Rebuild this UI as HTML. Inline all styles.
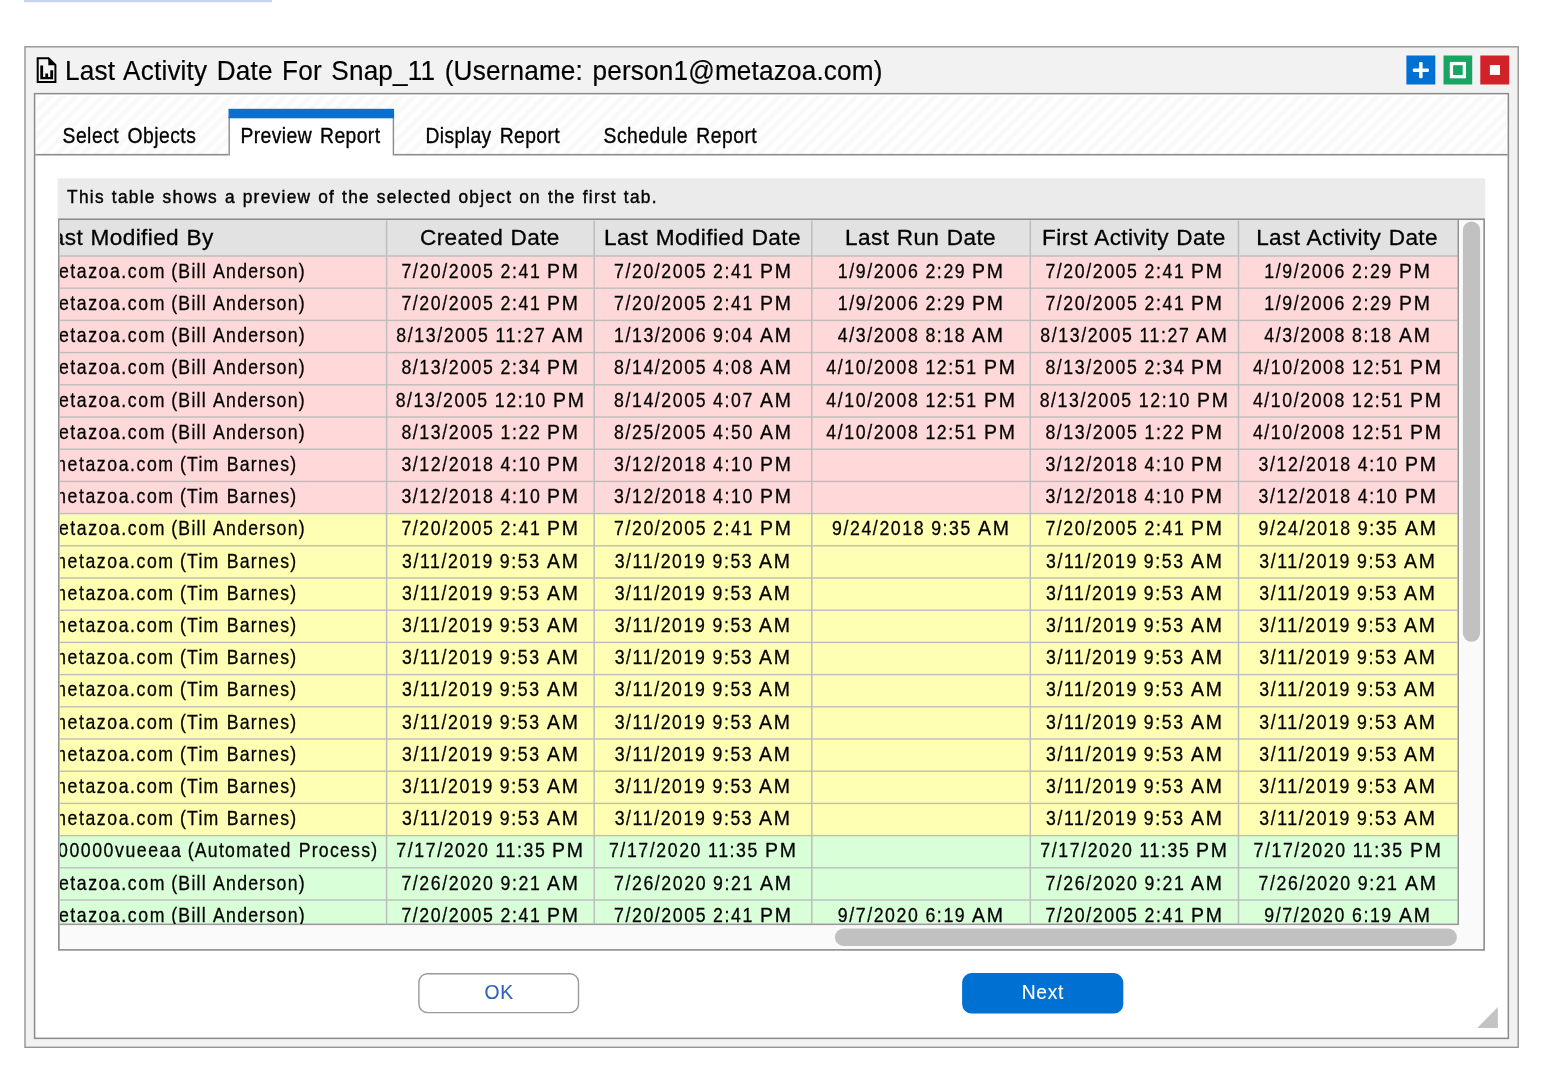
<!DOCTYPE html>
<html lang="en">
<head>
<meta charset="utf-8">
<title>Last Activity Date For Snap_11</title>
<style>
html,body{margin:0;padding:0;background:#ffffff;}
body{width:1542px;height:1080px;position:relative;overflow:hidden;font-family:"Liberation Sans", sans-serif;color:#000;}
svg.chrome{position:absolute;left:0;top:0;}
.t{position:absolute;white-space:nowrap;margin:0;padding:0;}
.txt{position:absolute;left:0;top:0;width:1542px;height:1080px;will-change:transform;}
.vp{position:absolute;overflow:hidden;}
.ap{display:inline-block;transform:scaleX(1.1);transform-origin:0 50%;margin-right:2.7px;}
</style>
</head>
<body>
<svg class="chrome" width="1542" height="1080" viewBox="0 0 1542 1080">
<defs>
<pattern id="hatch" width="9.2" height="9.2" patternUnits="userSpaceOnUse" patternTransform="rotate(-45)">
<rect x="0" y="0" width="9.2" height="9.2" fill="#ffffff"/><rect x="0" y="0" width="9.2" height="4.6" fill="#f9f9f9"/>
</pattern>
<clipPath id="vp"><rect x="59.6" y="220" width="1398" height="703.6"/></clipPath>
</defs>
<rect x="24" y="0" width="248" height="2.2" fill="#c6d4ee"/>
<rect x="25" y="46.8" width="1493.2" height="1000.5" fill="#f2f2f2" stroke="#939393" stroke-width="1.4"/>
<rect x="34.6" y="93.65" width="1473.75" height="944.7" fill="#ffffff" stroke="#8a8a8a" stroke-width="1.5"/>
<rect x="36.6" y="95.8" width="1469.8" height="58" fill="url(#hatch)"/>
<rect x="35.3" y="153.9" width="1472.3" height="1.6" fill="#8c8c8c"/>
<rect x="228.5" y="109" width="165.6" height="47.5" fill="#ffffff"/>
<rect x="228.5" y="117" width="1.4" height="38.5" fill="#8c8c8c"/>
<rect x="392.7" y="117" width="1.4" height="38.5" fill="#8c8c8c"/>
<rect x="228.5" y="108.8" width="165.6" height="9.5" fill="#0d6fcd"/>
<rect x="57.6" y="178.3" width="1427.6" height="41" fill="#ebebeb"/>
<rect x="58.85" y="219.25" width="1425.3" height="730.65" fill="#fafafa" stroke="#8c8c8c" stroke-width="1.6"/>
<rect x="59.6" y="220" width="1398" height="36" fill="#e2e2e2"/>
<g clip-path="url(#vp)">
<rect x="59.6" y="256" width="1398" height="32.7" fill="#ffd9d9"/>
<rect x="59.6" y="288.2" width="1398" height="32.7" fill="#ffd9d9"/>
<rect x="59.6" y="320.4" width="1398" height="32.7" fill="#ffd9d9"/>
<rect x="59.6" y="352.6" width="1398" height="32.7" fill="#ffd9d9"/>
<rect x="59.6" y="384.8" width="1398" height="32.7" fill="#ffd9d9"/>
<rect x="59.6" y="417" width="1398" height="32.7" fill="#ffd9d9"/>
<rect x="59.6" y="449.2" width="1398" height="32.7" fill="#ffd9d9"/>
<rect x="59.6" y="481.4" width="1398" height="32.7" fill="#ffd9d9"/>
<rect x="59.6" y="513.6" width="1398" height="32.7" fill="#ffffb4"/>
<rect x="59.6" y="545.8" width="1398" height="32.7" fill="#ffffb4"/>
<rect x="59.6" y="578" width="1398" height="32.7" fill="#ffffb4"/>
<rect x="59.6" y="610.2" width="1398" height="32.7" fill="#ffffb4"/>
<rect x="59.6" y="642.4" width="1398" height="32.7" fill="#ffffb4"/>
<rect x="59.6" y="674.6" width="1398" height="32.7" fill="#ffffb4"/>
<rect x="59.6" y="706.8" width="1398" height="32.7" fill="#ffffb4"/>
<rect x="59.6" y="739" width="1398" height="32.7" fill="#ffffb4"/>
<rect x="59.6" y="771.2" width="1398" height="32.7" fill="#ffffb4"/>
<rect x="59.6" y="803.4" width="1398" height="32.7" fill="#ffffb4"/>
<rect x="59.6" y="835.6" width="1398" height="32.7" fill="#d9ffd9"/>
<rect x="59.6" y="867.8" width="1398" height="32.7" fill="#d9ffd9"/>
<rect x="59.6" y="900" width="1398" height="32.7" fill="#d9ffd9"/>
<rect x="59.6" y="255.3" width="1398" height="1.4" fill="#bdbdbd"/>
<rect x="59.6" y="287.5" width="1398" height="1.4" fill="#bdbdbd"/>
<rect x="59.6" y="319.7" width="1398" height="1.4" fill="#bdbdbd"/>
<rect x="59.6" y="351.9" width="1398" height="1.4" fill="#bdbdbd"/>
<rect x="59.6" y="384.1" width="1398" height="1.4" fill="#bdbdbd"/>
<rect x="59.6" y="416.3" width="1398" height="1.4" fill="#bdbdbd"/>
<rect x="59.6" y="448.5" width="1398" height="1.4" fill="#bdbdbd"/>
<rect x="59.6" y="480.7" width="1398" height="1.4" fill="#bdbdbd"/>
<rect x="59.6" y="512.9" width="1398" height="1.4" fill="#bdbdbd"/>
<rect x="59.6" y="545.1" width="1398" height="1.4" fill="#bdbdbd"/>
<rect x="59.6" y="577.3" width="1398" height="1.4" fill="#bdbdbd"/>
<rect x="59.6" y="609.5" width="1398" height="1.4" fill="#bdbdbd"/>
<rect x="59.6" y="641.7" width="1398" height="1.4" fill="#bdbdbd"/>
<rect x="59.6" y="673.9" width="1398" height="1.4" fill="#bdbdbd"/>
<rect x="59.6" y="706.1" width="1398" height="1.4" fill="#bdbdbd"/>
<rect x="59.6" y="738.3" width="1398" height="1.4" fill="#bdbdbd"/>
<rect x="59.6" y="770.5" width="1398" height="1.4" fill="#bdbdbd"/>
<rect x="59.6" y="802.7" width="1398" height="1.4" fill="#bdbdbd"/>
<rect x="59.6" y="834.9" width="1398" height="1.4" fill="#bdbdbd"/>
<rect x="59.6" y="867.1" width="1398" height="1.4" fill="#bdbdbd"/>
<rect x="59.6" y="899.3" width="1398" height="1.4" fill="#bdbdbd"/>
<rect x="59.6" y="931.5" width="1398" height="1.4" fill="#bdbdbd"/>
<rect x="385.85" y="220.5" width="1.5" height="704" fill="#bdbdbd"/>
<rect x="593.45" y="220.5" width="1.5" height="704" fill="#bdbdbd"/>
<rect x="811.05" y="220.5" width="1.5" height="704" fill="#bdbdbd"/>
<rect x="1029.55" y="220.5" width="1.5" height="704" fill="#bdbdbd"/>
<rect x="1237.75" y="220.5" width="1.5" height="704" fill="#bdbdbd"/>
</g>
<rect x="1457.5" y="220" width="1.5" height="705" fill="#8f8f8f"/>
<rect x="59.6" y="923.5" width="1399.3" height="1.6" fill="#9b9b9b"/>
<rect x="1462.9" y="221.6" width="17.2" height="420.1" rx="8.6" fill="#c1c1c1"/>
<rect x="834.9" y="928.5" width="622" height="17.4" rx="8.7" fill="#c1c1c1"/>
<rect x="418.9" y="973.7" width="159.6" height="38.9" rx="8.5" fill="#ffffff" stroke="#9a9a9a" stroke-width="1.4"/>
<rect x="962.1" y="973.1" width="161.2" height="40.4" rx="9.5" fill="#0070d2"/>
<path d="M1497.9 1007.1 L1497.9 1027.9 L1477.1 1027.9 Z" fill="#c3c3c3"/>
<rect x="1406.4" y="55.5" width="28.9" height="29" fill="#0070d2"/>
<rect x="1412.8" y="68.6" width="16.1" height="3.4" rx="1.2" fill="#ffffff"/>
<rect x="1419.1" y="62" width="3.5" height="16.3" rx="1.2" fill="#ffffff"/>
<rect x="1443.5" y="55.5" width="28.7" height="29" fill="#19a463"/>
<rect x="1451.45" y="63.55" width="12.9" height="13.1" fill="none" stroke="#ffffff" stroke-width="3.3"/>
<rect x="1480.3" y="55.5" width="28.9" height="29" fill="#d12229"/>
<rect x="1489.9" y="65.1" width="10.1" height="9.8" fill="#ffffff"/>
<g>
<path d="M37.7 58.2 H48.6 L55.4 65 V82 H37.7 Z" fill="#f4f4f4" stroke="#000000" stroke-width="2" stroke-linejoin="miter"/>
<path d="M48.3 57.6 V65.2 H56.2 Z" fill="#000000"/>
<path d="M40.3 65.6 H43.1 V77 H45.3 V73.6 H48.1 V77 H50.3 V70.3 H53.1 V79.2 H40.3 Z" fill="#000000"/>
</g>
</svg>
<div class="txt">
<div class="t title" style="top:49.7px;font-size:28.4px;line-height:40px;height:40px;letter-spacing:0.17px;word-spacing:2.2px;transform:scale(0.922,0.99);transform-origin:0 30px;-webkit-text-stroke:0.2px #000;left:65.3px;">Last Activity Date For Snap_11 (Username: person1@metazoa.com)</div>
<div class="t tab" style="top:122.7px;font-size:19.3px;line-height:27px;height:27px;letter-spacing:0.52px;word-spacing:2.3px;transform:scale(1,1.15);transform-origin:0 20px;-webkit-text-stroke:0.3px #000;left:62.5px;">Select Objects</div>
<div class="t tab" style="top:122.7px;font-size:19.3px;line-height:27px;height:27px;letter-spacing:0.42px;word-spacing:2.3px;transform:scale(1,1.15);transform-origin:0 20px;-webkit-text-stroke:0.3px #000;left:240.5px;">Preview Report</div>
<div class="t tab" style="top:122.7px;font-size:19.3px;line-height:27px;height:27px;letter-spacing:0.42px;word-spacing:2.3px;transform:scale(1,1.15);transform-origin:0 20px;-webkit-text-stroke:0.3px #000;left:425.5px;">Display Report</div>
<div class="t tab" style="top:122.7px;font-size:19.3px;line-height:27px;height:27px;letter-spacing:0.52px;word-spacing:2.3px;transform:scale(1,1.15);transform-origin:0 20px;-webkit-text-stroke:0.3px #000;left:603.5px;">Schedule Report</div>
<div class="t info" style="top:185.25px;font-size:17.3px;line-height:24px;height:24px;letter-spacing:1.29px;word-spacing:0.8px;transform:scale(1,1.07);transform-origin:0 18px;-webkit-text-stroke:0.4px #000;left:67.1px;">This table shows a preview of the selected object on the first tab.</div>
<div class="vp" style="left:59.6px;top:220px;width:1397.1px;height:703.6px;">
<div class="t th" style="top:2.25px;font-size:22.6px;line-height:32px;height:32px;letter-spacing:0.4px;word-spacing:0.7px;transform:scale(1,0.95);transform-origin:0 23px;-webkit-text-stroke:0.3px #000;left:-20.8px;">Last Modified By</div>
<div class="t th" style="top:2.25px;font-size:22.6px;line-height:32px;height:32px;letter-spacing:0.4px;word-spacing:0.7px;transform:scale(1,0.95);transform-origin:50% 23px;-webkit-text-stroke:0.3px #000;left:326.5px;width:207.6px;text-align:center;">Created Date</div>
<div class="t th" style="top:2.25px;font-size:22.6px;line-height:32px;height:32px;letter-spacing:0.4px;word-spacing:0.7px;transform:scale(1,0.95);transform-origin:50% 23px;-webkit-text-stroke:0.3px #000;left:534.1px;width:217.6px;text-align:center;">Last Modified Date</div>
<div class="t th" style="top:2.25px;font-size:22.6px;line-height:32px;height:32px;letter-spacing:0.4px;word-spacing:0.7px;transform:scale(1,0.95);transform-origin:50% 23px;-webkit-text-stroke:0.3px #000;left:751.7px;width:218.5px;text-align:center;">Last Run Date</div>
<div class="t th" style="top:2.25px;font-size:22.6px;line-height:32px;height:32px;letter-spacing:0.4px;word-spacing:0.7px;transform:scale(1,0.95);transform-origin:50% 23px;-webkit-text-stroke:0.3px #000;left:970.2px;width:208.2px;text-align:center;">First Activity Date</div>
<div class="t th" style="top:2.25px;font-size:22.6px;line-height:32px;height:32px;letter-spacing:0.4px;word-spacing:0.7px;transform:scale(1,0.95);transform-origin:50% 23px;-webkit-text-stroke:0.3px #000;left:1178.4px;width:218.2px;text-align:center;">Last Activity Date</div>
<div class="t td" style="top:39.7px;font-size:17.7px;line-height:25px;height:25px;letter-spacing:1.56px;word-spacing:1px;transform:scale(1,1.12);transform-origin:0 18px;-webkit-text-stroke:0.25px #000;left:-17px;"><span style="letter-spacing:1.56px">metazoa.com </span><span style="letter-spacing:1.24px;margin-left:-2.2px">(Bill Anderson)</span></div>
<div class="t td" style="top:39.7px;font-size:17.7px;line-height:25px;height:25px;letter-spacing:1.6px;word-spacing:-0.5px;transform:scale(1,1.12);transform-origin:50% 18px;-webkit-text-stroke:0.25px #000;left:327.2px;width:207.6px;text-align:center;">7/20/2005 2:41 <span class="ap">PM</span></div>
<div class="t td" style="top:39.7px;font-size:17.7px;line-height:25px;height:25px;letter-spacing:1.6px;word-spacing:-0.5px;transform:scale(1,1.12);transform-origin:50% 18px;-webkit-text-stroke:0.25px #000;left:534.8px;width:217.6px;text-align:center;">7/20/2005 2:41 <span class="ap">PM</span></div>
<div class="t td" style="top:39.7px;font-size:17.7px;line-height:25px;height:25px;letter-spacing:1.6px;word-spacing:-0.5px;transform:scale(1,1.12);transform-origin:50% 18px;-webkit-text-stroke:0.25px #000;left:752.4px;width:218.5px;text-align:center;">1/9/2006 2:29 <span class="ap">PM</span></div>
<div class="t td" style="top:39.7px;font-size:17.7px;line-height:25px;height:25px;letter-spacing:1.6px;word-spacing:-0.5px;transform:scale(1,1.12);transform-origin:50% 18px;-webkit-text-stroke:0.25px #000;left:970.9px;width:208.2px;text-align:center;">7/20/2005 2:41 <span class="ap">PM</span></div>
<div class="t td" style="top:39.7px;font-size:17.7px;line-height:25px;height:25px;letter-spacing:1.6px;word-spacing:-0.5px;transform:scale(1,1.12);transform-origin:50% 18px;-webkit-text-stroke:0.25px #000;left:1179.1px;width:218.2px;text-align:center;">1/9/2006 2:29 <span class="ap">PM</span></div>
<div class="t td" style="top:71.9px;font-size:17.7px;line-height:25px;height:25px;letter-spacing:1.56px;word-spacing:1px;transform:scale(1,1.12);transform-origin:0 18px;-webkit-text-stroke:0.25px #000;left:-17px;"><span style="letter-spacing:1.56px">metazoa.com </span><span style="letter-spacing:1.24px;margin-left:-2.2px">(Bill Anderson)</span></div>
<div class="t td" style="top:71.9px;font-size:17.7px;line-height:25px;height:25px;letter-spacing:1.6px;word-spacing:-0.5px;transform:scale(1,1.12);transform-origin:50% 18px;-webkit-text-stroke:0.25px #000;left:327.2px;width:207.6px;text-align:center;">7/20/2005 2:41 <span class="ap">PM</span></div>
<div class="t td" style="top:71.9px;font-size:17.7px;line-height:25px;height:25px;letter-spacing:1.6px;word-spacing:-0.5px;transform:scale(1,1.12);transform-origin:50% 18px;-webkit-text-stroke:0.25px #000;left:534.8px;width:217.6px;text-align:center;">7/20/2005 2:41 <span class="ap">PM</span></div>
<div class="t td" style="top:71.9px;font-size:17.7px;line-height:25px;height:25px;letter-spacing:1.6px;word-spacing:-0.5px;transform:scale(1,1.12);transform-origin:50% 18px;-webkit-text-stroke:0.25px #000;left:752.4px;width:218.5px;text-align:center;">1/9/2006 2:29 <span class="ap">PM</span></div>
<div class="t td" style="top:71.9px;font-size:17.7px;line-height:25px;height:25px;letter-spacing:1.6px;word-spacing:-0.5px;transform:scale(1,1.12);transform-origin:50% 18px;-webkit-text-stroke:0.25px #000;left:970.9px;width:208.2px;text-align:center;">7/20/2005 2:41 <span class="ap">PM</span></div>
<div class="t td" style="top:71.9px;font-size:17.7px;line-height:25px;height:25px;letter-spacing:1.6px;word-spacing:-0.5px;transform:scale(1,1.12);transform-origin:50% 18px;-webkit-text-stroke:0.25px #000;left:1179.1px;width:218.2px;text-align:center;">1/9/2006 2:29 <span class="ap">PM</span></div>
<div class="t td" style="top:104.1px;font-size:17.7px;line-height:25px;height:25px;letter-spacing:1.56px;word-spacing:1px;transform:scale(1,1.12);transform-origin:0 18px;-webkit-text-stroke:0.25px #000;left:-17px;"><span style="letter-spacing:1.56px">metazoa.com </span><span style="letter-spacing:1.24px;margin-left:-2.2px">(Bill Anderson)</span></div>
<div class="t td" style="top:104.1px;font-size:17.7px;line-height:25px;height:25px;letter-spacing:1.6px;word-spacing:-0.5px;transform:scale(1,1.12);transform-origin:50% 18px;-webkit-text-stroke:0.25px #000;left:327.2px;width:207.6px;text-align:center;">8/13/2005 11:27 <span class="ap">AM</span></div>
<div class="t td" style="top:104.1px;font-size:17.7px;line-height:25px;height:25px;letter-spacing:1.6px;word-spacing:-0.5px;transform:scale(1,1.12);transform-origin:50% 18px;-webkit-text-stroke:0.25px #000;left:534.8px;width:217.6px;text-align:center;">1/13/2006 9:04 <span class="ap">AM</span></div>
<div class="t td" style="top:104.1px;font-size:17.7px;line-height:25px;height:25px;letter-spacing:1.6px;word-spacing:-0.5px;transform:scale(1,1.12);transform-origin:50% 18px;-webkit-text-stroke:0.25px #000;left:752.4px;width:218.5px;text-align:center;">4/3/2008 8:18 <span class="ap">AM</span></div>
<div class="t td" style="top:104.1px;font-size:17.7px;line-height:25px;height:25px;letter-spacing:1.6px;word-spacing:-0.5px;transform:scale(1,1.12);transform-origin:50% 18px;-webkit-text-stroke:0.25px #000;left:970.9px;width:208.2px;text-align:center;">8/13/2005 11:27 <span class="ap">AM</span></div>
<div class="t td" style="top:104.1px;font-size:17.7px;line-height:25px;height:25px;letter-spacing:1.6px;word-spacing:-0.5px;transform:scale(1,1.12);transform-origin:50% 18px;-webkit-text-stroke:0.25px #000;left:1179.1px;width:218.2px;text-align:center;">4/3/2008 8:18 <span class="ap">AM</span></div>
<div class="t td" style="top:136.3px;font-size:17.7px;line-height:25px;height:25px;letter-spacing:1.56px;word-spacing:1px;transform:scale(1,1.12);transform-origin:0 18px;-webkit-text-stroke:0.25px #000;left:-17px;"><span style="letter-spacing:1.56px">metazoa.com </span><span style="letter-spacing:1.24px;margin-left:-2.2px">(Bill Anderson)</span></div>
<div class="t td" style="top:136.3px;font-size:17.7px;line-height:25px;height:25px;letter-spacing:1.6px;word-spacing:-0.5px;transform:scale(1,1.12);transform-origin:50% 18px;-webkit-text-stroke:0.25px #000;left:327.2px;width:207.6px;text-align:center;">8/13/2005 2:34 <span class="ap">PM</span></div>
<div class="t td" style="top:136.3px;font-size:17.7px;line-height:25px;height:25px;letter-spacing:1.6px;word-spacing:-0.5px;transform:scale(1,1.12);transform-origin:50% 18px;-webkit-text-stroke:0.25px #000;left:534.8px;width:217.6px;text-align:center;">8/14/2005 4:08 <span class="ap">AM</span></div>
<div class="t td" style="top:136.3px;font-size:17.7px;line-height:25px;height:25px;letter-spacing:1.6px;word-spacing:-0.5px;transform:scale(1,1.12);transform-origin:50% 18px;-webkit-text-stroke:0.25px #000;left:752.4px;width:218.5px;text-align:center;">4/10/2008 12:51 <span class="ap">PM</span></div>
<div class="t td" style="top:136.3px;font-size:17.7px;line-height:25px;height:25px;letter-spacing:1.6px;word-spacing:-0.5px;transform:scale(1,1.12);transform-origin:50% 18px;-webkit-text-stroke:0.25px #000;left:970.9px;width:208.2px;text-align:center;">8/13/2005 2:34 <span class="ap">PM</span></div>
<div class="t td" style="top:136.3px;font-size:17.7px;line-height:25px;height:25px;letter-spacing:1.6px;word-spacing:-0.5px;transform:scale(1,1.12);transform-origin:50% 18px;-webkit-text-stroke:0.25px #000;left:1179.1px;width:218.2px;text-align:center;">4/10/2008 12:51 <span class="ap">PM</span></div>
<div class="t td" style="top:168.5px;font-size:17.7px;line-height:25px;height:25px;letter-spacing:1.56px;word-spacing:1px;transform:scale(1,1.12);transform-origin:0 18px;-webkit-text-stroke:0.25px #000;left:-17px;"><span style="letter-spacing:1.56px">metazoa.com </span><span style="letter-spacing:1.24px;margin-left:-2.2px">(Bill Anderson)</span></div>
<div class="t td" style="top:168.5px;font-size:17.7px;line-height:25px;height:25px;letter-spacing:1.6px;word-spacing:-0.5px;transform:scale(1,1.12);transform-origin:50% 18px;-webkit-text-stroke:0.25px #000;left:327.2px;width:207.6px;text-align:center;">8/13/2005 12:10 <span class="ap">PM</span></div>
<div class="t td" style="top:168.5px;font-size:17.7px;line-height:25px;height:25px;letter-spacing:1.6px;word-spacing:-0.5px;transform:scale(1,1.12);transform-origin:50% 18px;-webkit-text-stroke:0.25px #000;left:534.8px;width:217.6px;text-align:center;">8/14/2005 4:07 <span class="ap">AM</span></div>
<div class="t td" style="top:168.5px;font-size:17.7px;line-height:25px;height:25px;letter-spacing:1.6px;word-spacing:-0.5px;transform:scale(1,1.12);transform-origin:50% 18px;-webkit-text-stroke:0.25px #000;left:752.4px;width:218.5px;text-align:center;">4/10/2008 12:51 <span class="ap">PM</span></div>
<div class="t td" style="top:168.5px;font-size:17.7px;line-height:25px;height:25px;letter-spacing:1.6px;word-spacing:-0.5px;transform:scale(1,1.12);transform-origin:50% 18px;-webkit-text-stroke:0.25px #000;left:970.9px;width:208.2px;text-align:center;">8/13/2005 12:10 <span class="ap">PM</span></div>
<div class="t td" style="top:168.5px;font-size:17.7px;line-height:25px;height:25px;letter-spacing:1.6px;word-spacing:-0.5px;transform:scale(1,1.12);transform-origin:50% 18px;-webkit-text-stroke:0.25px #000;left:1179.1px;width:218.2px;text-align:center;">4/10/2008 12:51 <span class="ap">PM</span></div>
<div class="t td" style="top:200.7px;font-size:17.7px;line-height:25px;height:25px;letter-spacing:1.56px;word-spacing:1px;transform:scale(1,1.12);transform-origin:0 18px;-webkit-text-stroke:0.25px #000;left:-17px;"><span style="letter-spacing:1.56px">metazoa.com </span><span style="letter-spacing:1.24px;margin-left:-2.2px">(Bill Anderson)</span></div>
<div class="t td" style="top:200.7px;font-size:17.7px;line-height:25px;height:25px;letter-spacing:1.6px;word-spacing:-0.5px;transform:scale(1,1.12);transform-origin:50% 18px;-webkit-text-stroke:0.25px #000;left:327.2px;width:207.6px;text-align:center;">8/13/2005 1:22 <span class="ap">PM</span></div>
<div class="t td" style="top:200.7px;font-size:17.7px;line-height:25px;height:25px;letter-spacing:1.6px;word-spacing:-0.5px;transform:scale(1,1.12);transform-origin:50% 18px;-webkit-text-stroke:0.25px #000;left:534.8px;width:217.6px;text-align:center;">8/25/2005 4:50 <span class="ap">AM</span></div>
<div class="t td" style="top:200.7px;font-size:17.7px;line-height:25px;height:25px;letter-spacing:1.6px;word-spacing:-0.5px;transform:scale(1,1.12);transform-origin:50% 18px;-webkit-text-stroke:0.25px #000;left:752.4px;width:218.5px;text-align:center;">4/10/2008 12:51 <span class="ap">PM</span></div>
<div class="t td" style="top:200.7px;font-size:17.7px;line-height:25px;height:25px;letter-spacing:1.6px;word-spacing:-0.5px;transform:scale(1,1.12);transform-origin:50% 18px;-webkit-text-stroke:0.25px #000;left:970.9px;width:208.2px;text-align:center;">8/13/2005 1:22 <span class="ap">PM</span></div>
<div class="t td" style="top:200.7px;font-size:17.7px;line-height:25px;height:25px;letter-spacing:1.6px;word-spacing:-0.5px;transform:scale(1,1.12);transform-origin:50% 18px;-webkit-text-stroke:0.25px #000;left:1179.1px;width:218.2px;text-align:center;">4/10/2008 12:51 <span class="ap">PM</span></div>
<div class="t td" style="top:232.9px;font-size:17.7px;line-height:25px;height:25px;letter-spacing:1.56px;word-spacing:1px;transform:scale(1,1.12);transform-origin:0 18px;-webkit-text-stroke:0.25px #000;left:-8.3px;"><span style="letter-spacing:1.56px">metazoa.com </span><span style="letter-spacing:1.24px;margin-left:-2.2px">(Tim Barnes)</span></div>
<div class="t td" style="top:232.9px;font-size:17.7px;line-height:25px;height:25px;letter-spacing:1.6px;word-spacing:-0.5px;transform:scale(1,1.12);transform-origin:50% 18px;-webkit-text-stroke:0.25px #000;left:327.2px;width:207.6px;text-align:center;">3/12/2018 4:10 <span class="ap">PM</span></div>
<div class="t td" style="top:232.9px;font-size:17.7px;line-height:25px;height:25px;letter-spacing:1.6px;word-spacing:-0.5px;transform:scale(1,1.12);transform-origin:50% 18px;-webkit-text-stroke:0.25px #000;left:534.8px;width:217.6px;text-align:center;">3/12/2018 4:10 <span class="ap">PM</span></div>
<div class="t td" style="top:232.9px;font-size:17.7px;line-height:25px;height:25px;letter-spacing:1.6px;word-spacing:-0.5px;transform:scale(1,1.12);transform-origin:50% 18px;-webkit-text-stroke:0.25px #000;left:970.9px;width:208.2px;text-align:center;">3/12/2018 4:10 <span class="ap">PM</span></div>
<div class="t td" style="top:232.9px;font-size:17.7px;line-height:25px;height:25px;letter-spacing:1.6px;word-spacing:-0.5px;transform:scale(1,1.12);transform-origin:50% 18px;-webkit-text-stroke:0.25px #000;left:1179.1px;width:218.2px;text-align:center;">3/12/2018 4:10 <span class="ap">PM</span></div>
<div class="t td" style="top:265.1px;font-size:17.7px;line-height:25px;height:25px;letter-spacing:1.56px;word-spacing:1px;transform:scale(1,1.12);transform-origin:0 18px;-webkit-text-stroke:0.25px #000;left:-8.3px;"><span style="letter-spacing:1.56px">metazoa.com </span><span style="letter-spacing:1.24px;margin-left:-2.2px">(Tim Barnes)</span></div>
<div class="t td" style="top:265.1px;font-size:17.7px;line-height:25px;height:25px;letter-spacing:1.6px;word-spacing:-0.5px;transform:scale(1,1.12);transform-origin:50% 18px;-webkit-text-stroke:0.25px #000;left:327.2px;width:207.6px;text-align:center;">3/12/2018 4:10 <span class="ap">PM</span></div>
<div class="t td" style="top:265.1px;font-size:17.7px;line-height:25px;height:25px;letter-spacing:1.6px;word-spacing:-0.5px;transform:scale(1,1.12);transform-origin:50% 18px;-webkit-text-stroke:0.25px #000;left:534.8px;width:217.6px;text-align:center;">3/12/2018 4:10 <span class="ap">PM</span></div>
<div class="t td" style="top:265.1px;font-size:17.7px;line-height:25px;height:25px;letter-spacing:1.6px;word-spacing:-0.5px;transform:scale(1,1.12);transform-origin:50% 18px;-webkit-text-stroke:0.25px #000;left:970.9px;width:208.2px;text-align:center;">3/12/2018 4:10 <span class="ap">PM</span></div>
<div class="t td" style="top:265.1px;font-size:17.7px;line-height:25px;height:25px;letter-spacing:1.6px;word-spacing:-0.5px;transform:scale(1,1.12);transform-origin:50% 18px;-webkit-text-stroke:0.25px #000;left:1179.1px;width:218.2px;text-align:center;">3/12/2018 4:10 <span class="ap">PM</span></div>
<div class="t td" style="top:297.3px;font-size:17.7px;line-height:25px;height:25px;letter-spacing:1.56px;word-spacing:1px;transform:scale(1,1.12);transform-origin:0 18px;-webkit-text-stroke:0.25px #000;left:-17px;"><span style="letter-spacing:1.56px">metazoa.com </span><span style="letter-spacing:1.24px;margin-left:-2.2px">(Bill Anderson)</span></div>
<div class="t td" style="top:297.3px;font-size:17.7px;line-height:25px;height:25px;letter-spacing:1.6px;word-spacing:-0.5px;transform:scale(1,1.12);transform-origin:50% 18px;-webkit-text-stroke:0.25px #000;left:327.2px;width:207.6px;text-align:center;">7/20/2005 2:41 <span class="ap">PM</span></div>
<div class="t td" style="top:297.3px;font-size:17.7px;line-height:25px;height:25px;letter-spacing:1.6px;word-spacing:-0.5px;transform:scale(1,1.12);transform-origin:50% 18px;-webkit-text-stroke:0.25px #000;left:534.8px;width:217.6px;text-align:center;">7/20/2005 2:41 <span class="ap">PM</span></div>
<div class="t td" style="top:297.3px;font-size:17.7px;line-height:25px;height:25px;letter-spacing:1.6px;word-spacing:-0.5px;transform:scale(1,1.12);transform-origin:50% 18px;-webkit-text-stroke:0.25px #000;left:752.4px;width:218.5px;text-align:center;">9/24/2018 9:35 <span class="ap">AM</span></div>
<div class="t td" style="top:297.3px;font-size:17.7px;line-height:25px;height:25px;letter-spacing:1.6px;word-spacing:-0.5px;transform:scale(1,1.12);transform-origin:50% 18px;-webkit-text-stroke:0.25px #000;left:970.9px;width:208.2px;text-align:center;">7/20/2005 2:41 <span class="ap">PM</span></div>
<div class="t td" style="top:297.3px;font-size:17.7px;line-height:25px;height:25px;letter-spacing:1.6px;word-spacing:-0.5px;transform:scale(1,1.12);transform-origin:50% 18px;-webkit-text-stroke:0.25px #000;left:1179.1px;width:218.2px;text-align:center;">9/24/2018 9:35 <span class="ap">AM</span></div>
<div class="t td" style="top:329.5px;font-size:17.7px;line-height:25px;height:25px;letter-spacing:1.56px;word-spacing:1px;transform:scale(1,1.12);transform-origin:0 18px;-webkit-text-stroke:0.25px #000;left:-8.3px;"><span style="letter-spacing:1.56px">metazoa.com </span><span style="letter-spacing:1.24px;margin-left:-2.2px">(Tim Barnes)</span></div>
<div class="t td" style="top:329.5px;font-size:17.7px;line-height:25px;height:25px;letter-spacing:1.6px;word-spacing:-0.5px;transform:scale(1,1.12);transform-origin:50% 18px;-webkit-text-stroke:0.25px #000;left:327.2px;width:207.6px;text-align:center;">3/11/2019 9:53 <span class="ap">AM</span></div>
<div class="t td" style="top:329.5px;font-size:17.7px;line-height:25px;height:25px;letter-spacing:1.6px;word-spacing:-0.5px;transform:scale(1,1.12);transform-origin:50% 18px;-webkit-text-stroke:0.25px #000;left:534.8px;width:217.6px;text-align:center;">3/11/2019 9:53 <span class="ap">AM</span></div>
<div class="t td" style="top:329.5px;font-size:17.7px;line-height:25px;height:25px;letter-spacing:1.6px;word-spacing:-0.5px;transform:scale(1,1.12);transform-origin:50% 18px;-webkit-text-stroke:0.25px #000;left:970.9px;width:208.2px;text-align:center;">3/11/2019 9:53 <span class="ap">AM</span></div>
<div class="t td" style="top:329.5px;font-size:17.7px;line-height:25px;height:25px;letter-spacing:1.6px;word-spacing:-0.5px;transform:scale(1,1.12);transform-origin:50% 18px;-webkit-text-stroke:0.25px #000;left:1179.1px;width:218.2px;text-align:center;">3/11/2019 9:53 <span class="ap">AM</span></div>
<div class="t td" style="top:361.7px;font-size:17.7px;line-height:25px;height:25px;letter-spacing:1.56px;word-spacing:1px;transform:scale(1,1.12);transform-origin:0 18px;-webkit-text-stroke:0.25px #000;left:-8.3px;"><span style="letter-spacing:1.56px">metazoa.com </span><span style="letter-spacing:1.24px;margin-left:-2.2px">(Tim Barnes)</span></div>
<div class="t td" style="top:361.7px;font-size:17.7px;line-height:25px;height:25px;letter-spacing:1.6px;word-spacing:-0.5px;transform:scale(1,1.12);transform-origin:50% 18px;-webkit-text-stroke:0.25px #000;left:327.2px;width:207.6px;text-align:center;">3/11/2019 9:53 <span class="ap">AM</span></div>
<div class="t td" style="top:361.7px;font-size:17.7px;line-height:25px;height:25px;letter-spacing:1.6px;word-spacing:-0.5px;transform:scale(1,1.12);transform-origin:50% 18px;-webkit-text-stroke:0.25px #000;left:534.8px;width:217.6px;text-align:center;">3/11/2019 9:53 <span class="ap">AM</span></div>
<div class="t td" style="top:361.7px;font-size:17.7px;line-height:25px;height:25px;letter-spacing:1.6px;word-spacing:-0.5px;transform:scale(1,1.12);transform-origin:50% 18px;-webkit-text-stroke:0.25px #000;left:970.9px;width:208.2px;text-align:center;">3/11/2019 9:53 <span class="ap">AM</span></div>
<div class="t td" style="top:361.7px;font-size:17.7px;line-height:25px;height:25px;letter-spacing:1.6px;word-spacing:-0.5px;transform:scale(1,1.12);transform-origin:50% 18px;-webkit-text-stroke:0.25px #000;left:1179.1px;width:218.2px;text-align:center;">3/11/2019 9:53 <span class="ap">AM</span></div>
<div class="t td" style="top:393.9px;font-size:17.7px;line-height:25px;height:25px;letter-spacing:1.56px;word-spacing:1px;transform:scale(1,1.12);transform-origin:0 18px;-webkit-text-stroke:0.25px #000;left:-8.3px;"><span style="letter-spacing:1.56px">metazoa.com </span><span style="letter-spacing:1.24px;margin-left:-2.2px">(Tim Barnes)</span></div>
<div class="t td" style="top:393.9px;font-size:17.7px;line-height:25px;height:25px;letter-spacing:1.6px;word-spacing:-0.5px;transform:scale(1,1.12);transform-origin:50% 18px;-webkit-text-stroke:0.25px #000;left:327.2px;width:207.6px;text-align:center;">3/11/2019 9:53 <span class="ap">AM</span></div>
<div class="t td" style="top:393.9px;font-size:17.7px;line-height:25px;height:25px;letter-spacing:1.6px;word-spacing:-0.5px;transform:scale(1,1.12);transform-origin:50% 18px;-webkit-text-stroke:0.25px #000;left:534.8px;width:217.6px;text-align:center;">3/11/2019 9:53 <span class="ap">AM</span></div>
<div class="t td" style="top:393.9px;font-size:17.7px;line-height:25px;height:25px;letter-spacing:1.6px;word-spacing:-0.5px;transform:scale(1,1.12);transform-origin:50% 18px;-webkit-text-stroke:0.25px #000;left:970.9px;width:208.2px;text-align:center;">3/11/2019 9:53 <span class="ap">AM</span></div>
<div class="t td" style="top:393.9px;font-size:17.7px;line-height:25px;height:25px;letter-spacing:1.6px;word-spacing:-0.5px;transform:scale(1,1.12);transform-origin:50% 18px;-webkit-text-stroke:0.25px #000;left:1179.1px;width:218.2px;text-align:center;">3/11/2019 9:53 <span class="ap">AM</span></div>
<div class="t td" style="top:426.1px;font-size:17.7px;line-height:25px;height:25px;letter-spacing:1.56px;word-spacing:1px;transform:scale(1,1.12);transform-origin:0 18px;-webkit-text-stroke:0.25px #000;left:-8.3px;"><span style="letter-spacing:1.56px">metazoa.com </span><span style="letter-spacing:1.24px;margin-left:-2.2px">(Tim Barnes)</span></div>
<div class="t td" style="top:426.1px;font-size:17.7px;line-height:25px;height:25px;letter-spacing:1.6px;word-spacing:-0.5px;transform:scale(1,1.12);transform-origin:50% 18px;-webkit-text-stroke:0.25px #000;left:327.2px;width:207.6px;text-align:center;">3/11/2019 9:53 <span class="ap">AM</span></div>
<div class="t td" style="top:426.1px;font-size:17.7px;line-height:25px;height:25px;letter-spacing:1.6px;word-spacing:-0.5px;transform:scale(1,1.12);transform-origin:50% 18px;-webkit-text-stroke:0.25px #000;left:534.8px;width:217.6px;text-align:center;">3/11/2019 9:53 <span class="ap">AM</span></div>
<div class="t td" style="top:426.1px;font-size:17.7px;line-height:25px;height:25px;letter-spacing:1.6px;word-spacing:-0.5px;transform:scale(1,1.12);transform-origin:50% 18px;-webkit-text-stroke:0.25px #000;left:970.9px;width:208.2px;text-align:center;">3/11/2019 9:53 <span class="ap">AM</span></div>
<div class="t td" style="top:426.1px;font-size:17.7px;line-height:25px;height:25px;letter-spacing:1.6px;word-spacing:-0.5px;transform:scale(1,1.12);transform-origin:50% 18px;-webkit-text-stroke:0.25px #000;left:1179.1px;width:218.2px;text-align:center;">3/11/2019 9:53 <span class="ap">AM</span></div>
<div class="t td" style="top:458.3px;font-size:17.7px;line-height:25px;height:25px;letter-spacing:1.56px;word-spacing:1px;transform:scale(1,1.12);transform-origin:0 18px;-webkit-text-stroke:0.25px #000;left:-8.3px;"><span style="letter-spacing:1.56px">metazoa.com </span><span style="letter-spacing:1.24px;margin-left:-2.2px">(Tim Barnes)</span></div>
<div class="t td" style="top:458.3px;font-size:17.7px;line-height:25px;height:25px;letter-spacing:1.6px;word-spacing:-0.5px;transform:scale(1,1.12);transform-origin:50% 18px;-webkit-text-stroke:0.25px #000;left:327.2px;width:207.6px;text-align:center;">3/11/2019 9:53 <span class="ap">AM</span></div>
<div class="t td" style="top:458.3px;font-size:17.7px;line-height:25px;height:25px;letter-spacing:1.6px;word-spacing:-0.5px;transform:scale(1,1.12);transform-origin:50% 18px;-webkit-text-stroke:0.25px #000;left:534.8px;width:217.6px;text-align:center;">3/11/2019 9:53 <span class="ap">AM</span></div>
<div class="t td" style="top:458.3px;font-size:17.7px;line-height:25px;height:25px;letter-spacing:1.6px;word-spacing:-0.5px;transform:scale(1,1.12);transform-origin:50% 18px;-webkit-text-stroke:0.25px #000;left:970.9px;width:208.2px;text-align:center;">3/11/2019 9:53 <span class="ap">AM</span></div>
<div class="t td" style="top:458.3px;font-size:17.7px;line-height:25px;height:25px;letter-spacing:1.6px;word-spacing:-0.5px;transform:scale(1,1.12);transform-origin:50% 18px;-webkit-text-stroke:0.25px #000;left:1179.1px;width:218.2px;text-align:center;">3/11/2019 9:53 <span class="ap">AM</span></div>
<div class="t td" style="top:490.5px;font-size:17.7px;line-height:25px;height:25px;letter-spacing:1.56px;word-spacing:1px;transform:scale(1,1.12);transform-origin:0 18px;-webkit-text-stroke:0.25px #000;left:-8.3px;"><span style="letter-spacing:1.56px">metazoa.com </span><span style="letter-spacing:1.24px;margin-left:-2.2px">(Tim Barnes)</span></div>
<div class="t td" style="top:490.5px;font-size:17.7px;line-height:25px;height:25px;letter-spacing:1.6px;word-spacing:-0.5px;transform:scale(1,1.12);transform-origin:50% 18px;-webkit-text-stroke:0.25px #000;left:327.2px;width:207.6px;text-align:center;">3/11/2019 9:53 <span class="ap">AM</span></div>
<div class="t td" style="top:490.5px;font-size:17.7px;line-height:25px;height:25px;letter-spacing:1.6px;word-spacing:-0.5px;transform:scale(1,1.12);transform-origin:50% 18px;-webkit-text-stroke:0.25px #000;left:534.8px;width:217.6px;text-align:center;">3/11/2019 9:53 <span class="ap">AM</span></div>
<div class="t td" style="top:490.5px;font-size:17.7px;line-height:25px;height:25px;letter-spacing:1.6px;word-spacing:-0.5px;transform:scale(1,1.12);transform-origin:50% 18px;-webkit-text-stroke:0.25px #000;left:970.9px;width:208.2px;text-align:center;">3/11/2019 9:53 <span class="ap">AM</span></div>
<div class="t td" style="top:490.5px;font-size:17.7px;line-height:25px;height:25px;letter-spacing:1.6px;word-spacing:-0.5px;transform:scale(1,1.12);transform-origin:50% 18px;-webkit-text-stroke:0.25px #000;left:1179.1px;width:218.2px;text-align:center;">3/11/2019 9:53 <span class="ap">AM</span></div>
<div class="t td" style="top:522.7px;font-size:17.7px;line-height:25px;height:25px;letter-spacing:1.56px;word-spacing:1px;transform:scale(1,1.12);transform-origin:0 18px;-webkit-text-stroke:0.25px #000;left:-8.3px;"><span style="letter-spacing:1.56px">metazoa.com </span><span style="letter-spacing:1.24px;margin-left:-2.2px">(Tim Barnes)</span></div>
<div class="t td" style="top:522.7px;font-size:17.7px;line-height:25px;height:25px;letter-spacing:1.6px;word-spacing:-0.5px;transform:scale(1,1.12);transform-origin:50% 18px;-webkit-text-stroke:0.25px #000;left:327.2px;width:207.6px;text-align:center;">3/11/2019 9:53 <span class="ap">AM</span></div>
<div class="t td" style="top:522.7px;font-size:17.7px;line-height:25px;height:25px;letter-spacing:1.6px;word-spacing:-0.5px;transform:scale(1,1.12);transform-origin:50% 18px;-webkit-text-stroke:0.25px #000;left:534.8px;width:217.6px;text-align:center;">3/11/2019 9:53 <span class="ap">AM</span></div>
<div class="t td" style="top:522.7px;font-size:17.7px;line-height:25px;height:25px;letter-spacing:1.6px;word-spacing:-0.5px;transform:scale(1,1.12);transform-origin:50% 18px;-webkit-text-stroke:0.25px #000;left:970.9px;width:208.2px;text-align:center;">3/11/2019 9:53 <span class="ap">AM</span></div>
<div class="t td" style="top:522.7px;font-size:17.7px;line-height:25px;height:25px;letter-spacing:1.6px;word-spacing:-0.5px;transform:scale(1,1.12);transform-origin:50% 18px;-webkit-text-stroke:0.25px #000;left:1179.1px;width:218.2px;text-align:center;">3/11/2019 9:53 <span class="ap">AM</span></div>
<div class="t td" style="top:554.9px;font-size:17.7px;line-height:25px;height:25px;letter-spacing:1.56px;word-spacing:1px;transform:scale(1,1.12);transform-origin:0 18px;-webkit-text-stroke:0.25px #000;left:-8.3px;"><span style="letter-spacing:1.56px">metazoa.com </span><span style="letter-spacing:1.24px;margin-left:-2.2px">(Tim Barnes)</span></div>
<div class="t td" style="top:554.9px;font-size:17.7px;line-height:25px;height:25px;letter-spacing:1.6px;word-spacing:-0.5px;transform:scale(1,1.12);transform-origin:50% 18px;-webkit-text-stroke:0.25px #000;left:327.2px;width:207.6px;text-align:center;">3/11/2019 9:53 <span class="ap">AM</span></div>
<div class="t td" style="top:554.9px;font-size:17.7px;line-height:25px;height:25px;letter-spacing:1.6px;word-spacing:-0.5px;transform:scale(1,1.12);transform-origin:50% 18px;-webkit-text-stroke:0.25px #000;left:534.8px;width:217.6px;text-align:center;">3/11/2019 9:53 <span class="ap">AM</span></div>
<div class="t td" style="top:554.9px;font-size:17.7px;line-height:25px;height:25px;letter-spacing:1.6px;word-spacing:-0.5px;transform:scale(1,1.12);transform-origin:50% 18px;-webkit-text-stroke:0.25px #000;left:970.9px;width:208.2px;text-align:center;">3/11/2019 9:53 <span class="ap">AM</span></div>
<div class="t td" style="top:554.9px;font-size:17.7px;line-height:25px;height:25px;letter-spacing:1.6px;word-spacing:-0.5px;transform:scale(1,1.12);transform-origin:50% 18px;-webkit-text-stroke:0.25px #000;left:1179.1px;width:218.2px;text-align:center;">3/11/2019 9:53 <span class="ap">AM</span></div>
<div class="t td" style="top:587.1px;font-size:17.7px;line-height:25px;height:25px;letter-spacing:1.56px;word-spacing:1px;transform:scale(1,1.12);transform-origin:0 18px;-webkit-text-stroke:0.25px #000;left:-8.3px;"><span style="letter-spacing:1.56px">metazoa.com </span><span style="letter-spacing:1.24px;margin-left:-2.2px">(Tim Barnes)</span></div>
<div class="t td" style="top:587.1px;font-size:17.7px;line-height:25px;height:25px;letter-spacing:1.6px;word-spacing:-0.5px;transform:scale(1,1.12);transform-origin:50% 18px;-webkit-text-stroke:0.25px #000;left:327.2px;width:207.6px;text-align:center;">3/11/2019 9:53 <span class="ap">AM</span></div>
<div class="t td" style="top:587.1px;font-size:17.7px;line-height:25px;height:25px;letter-spacing:1.6px;word-spacing:-0.5px;transform:scale(1,1.12);transform-origin:50% 18px;-webkit-text-stroke:0.25px #000;left:534.8px;width:217.6px;text-align:center;">3/11/2019 9:53 <span class="ap">AM</span></div>
<div class="t td" style="top:587.1px;font-size:17.7px;line-height:25px;height:25px;letter-spacing:1.6px;word-spacing:-0.5px;transform:scale(1,1.12);transform-origin:50% 18px;-webkit-text-stroke:0.25px #000;left:970.9px;width:208.2px;text-align:center;">3/11/2019 9:53 <span class="ap">AM</span></div>
<div class="t td" style="top:587.1px;font-size:17.7px;line-height:25px;height:25px;letter-spacing:1.6px;word-spacing:-0.5px;transform:scale(1,1.12);transform-origin:50% 18px;-webkit-text-stroke:0.25px #000;left:1179.1px;width:218.2px;text-align:center;">3/11/2019 9:53 <span class="ap">AM</span></div>
<div class="t td" style="top:619.3px;font-size:17.7px;line-height:25px;height:25px;letter-spacing:1.56px;word-spacing:1px;transform:scale(1,1.12);transform-origin:0 18px;-webkit-text-stroke:0.25px #000;left:-13px;"><span style="letter-spacing:1.56px">000000vueeaa </span><span style="letter-spacing:1.24px;margin-left:-2.2px">(Automated Process)</span></div>
<div class="t td" style="top:619.3px;font-size:17.7px;line-height:25px;height:25px;letter-spacing:1.6px;word-spacing:-0.5px;transform:scale(1,1.12);transform-origin:50% 18px;-webkit-text-stroke:0.25px #000;left:327.2px;width:207.6px;text-align:center;">7/17/2020 11:35 <span class="ap">PM</span></div>
<div class="t td" style="top:619.3px;font-size:17.7px;line-height:25px;height:25px;letter-spacing:1.6px;word-spacing:-0.5px;transform:scale(1,1.12);transform-origin:50% 18px;-webkit-text-stroke:0.25px #000;left:534.8px;width:217.6px;text-align:center;">7/17/2020 11:35 <span class="ap">PM</span></div>
<div class="t td" style="top:619.3px;font-size:17.7px;line-height:25px;height:25px;letter-spacing:1.6px;word-spacing:-0.5px;transform:scale(1,1.12);transform-origin:50% 18px;-webkit-text-stroke:0.25px #000;left:970.9px;width:208.2px;text-align:center;">7/17/2020 11:35 <span class="ap">PM</span></div>
<div class="t td" style="top:619.3px;font-size:17.7px;line-height:25px;height:25px;letter-spacing:1.6px;word-spacing:-0.5px;transform:scale(1,1.12);transform-origin:50% 18px;-webkit-text-stroke:0.25px #000;left:1179.1px;width:218.2px;text-align:center;">7/17/2020 11:35 <span class="ap">PM</span></div>
<div class="t td" style="top:651.5px;font-size:17.7px;line-height:25px;height:25px;letter-spacing:1.56px;word-spacing:1px;transform:scale(1,1.12);transform-origin:0 18px;-webkit-text-stroke:0.25px #000;left:-17px;"><span style="letter-spacing:1.56px">metazoa.com </span><span style="letter-spacing:1.24px;margin-left:-2.2px">(Bill Anderson)</span></div>
<div class="t td" style="top:651.5px;font-size:17.7px;line-height:25px;height:25px;letter-spacing:1.6px;word-spacing:-0.5px;transform:scale(1,1.12);transform-origin:50% 18px;-webkit-text-stroke:0.25px #000;left:327.2px;width:207.6px;text-align:center;">7/26/2020 9:21 <span class="ap">AM</span></div>
<div class="t td" style="top:651.5px;font-size:17.7px;line-height:25px;height:25px;letter-spacing:1.6px;word-spacing:-0.5px;transform:scale(1,1.12);transform-origin:50% 18px;-webkit-text-stroke:0.25px #000;left:534.8px;width:217.6px;text-align:center;">7/26/2020 9:21 <span class="ap">AM</span></div>
<div class="t td" style="top:651.5px;font-size:17.7px;line-height:25px;height:25px;letter-spacing:1.6px;word-spacing:-0.5px;transform:scale(1,1.12);transform-origin:50% 18px;-webkit-text-stroke:0.25px #000;left:970.9px;width:208.2px;text-align:center;">7/26/2020 9:21 <span class="ap">AM</span></div>
<div class="t td" style="top:651.5px;font-size:17.7px;line-height:25px;height:25px;letter-spacing:1.6px;word-spacing:-0.5px;transform:scale(1,1.12);transform-origin:50% 18px;-webkit-text-stroke:0.25px #000;left:1179.1px;width:218.2px;text-align:center;">7/26/2020 9:21 <span class="ap">AM</span></div>
<div class="t td" style="top:683.7px;font-size:17.7px;line-height:25px;height:25px;letter-spacing:1.56px;word-spacing:1px;transform:scale(1,1.12);transform-origin:0 18px;-webkit-text-stroke:0.25px #000;left:-17px;"><span style="letter-spacing:1.56px">metazoa.com </span><span style="letter-spacing:1.24px;margin-left:-2.2px">(Bill Anderson)</span></div>
<div class="t td" style="top:683.7px;font-size:17.7px;line-height:25px;height:25px;letter-spacing:1.6px;word-spacing:-0.5px;transform:scale(1,1.12);transform-origin:50% 18px;-webkit-text-stroke:0.25px #000;left:327.2px;width:207.6px;text-align:center;">7/20/2005 2:41 <span class="ap">PM</span></div>
<div class="t td" style="top:683.7px;font-size:17.7px;line-height:25px;height:25px;letter-spacing:1.6px;word-spacing:-0.5px;transform:scale(1,1.12);transform-origin:50% 18px;-webkit-text-stroke:0.25px #000;left:534.8px;width:217.6px;text-align:center;">7/20/2005 2:41 <span class="ap">PM</span></div>
<div class="t td" style="top:683.7px;font-size:17.7px;line-height:25px;height:25px;letter-spacing:1.6px;word-spacing:-0.5px;transform:scale(1,1.12);transform-origin:50% 18px;-webkit-text-stroke:0.25px #000;left:752.4px;width:218.5px;text-align:center;">9/7/2020 6:19 <span class="ap">AM</span></div>
<div class="t td" style="top:683.7px;font-size:17.7px;line-height:25px;height:25px;letter-spacing:1.6px;word-spacing:-0.5px;transform:scale(1,1.12);transform-origin:50% 18px;-webkit-text-stroke:0.25px #000;left:970.9px;width:208.2px;text-align:center;">7/20/2005 2:41 <span class="ap">PM</span></div>
<div class="t td" style="top:683.7px;font-size:17.7px;line-height:25px;height:25px;letter-spacing:1.6px;word-spacing:-0.5px;transform:scale(1,1.12);transform-origin:50% 18px;-webkit-text-stroke:0.25px #000;left:1179.1px;width:218.2px;text-align:center;">9/7/2020 6:19 <span class="ap">AM</span></div>
</div>
<div class="t btn" style="top:978.9px;font-size:19.3px;line-height:27px;height:27px;letter-spacing:0.7px;transform:scale(1,1.09);transform-origin:50% 20px;-webkit-text-stroke:0.1px #2f62be;color:#2f62be;left:419.25px;width:160px;text-align:center;">OK</div>
<div class="t btn" style="top:979.2px;font-size:19.3px;line-height:27px;height:27px;letter-spacing:0.7px;transform:scale(1,1.09);transform-origin:50% 20px;-webkit-text-stroke:0.1px #ffffff;color:#ffffff;left:962.95px;width:160px;text-align:center;">Next</div>
</div>
</body>
</html>
